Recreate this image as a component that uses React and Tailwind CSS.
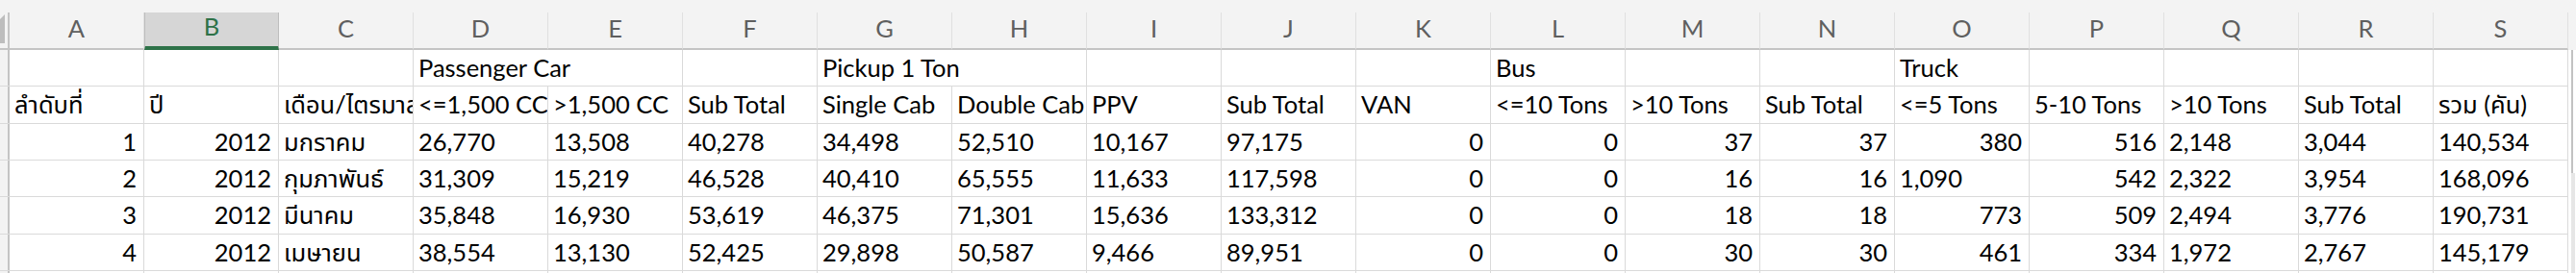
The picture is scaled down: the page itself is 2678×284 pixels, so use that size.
import React from 'react'

const LETTERS = 'ABCDEFGHIJKLMNOPQRS'.split('')

// [text, align, overflow]
const L = (t, o) => [t, 'l', o]
const R = (t) => [t, 'r']
const _ = null

const ROWS = [
  [_, _, _, L('Passenger Car', true), _, _, L('Pickup 1 Ton', true), _, _, _, _, L('Bus'), _, _, L('Truck'), _, _, _, _],
  [
    L('ลำดับที่'), L('ปี'), L('เดือน/ไตรมาส'), L('<=1,500 CC'), L('>1,500 CC'), L('Sub Total'),
    L('Single Cab'), L('Double Cab'), L('PPV'), L('Sub Total'), L('VAN'), L('<=10 Tons'),
    L('>10 Tons'), L('Sub Total'), L('<=5 Tons'), L('5-10 Tons'), L('>10 Tons'), L('Sub Total'), L('รวม (คัน)'),
  ],
  [
    R('1'), R('2012'), L('มกราคม'), L('26,770'), L('13,508'), L('40,278'), L('34,498'), L('52,510'),
    L('10,167'), L('97,175'), R('0'), R('0'), R('37'), R('37'), R('380'), R('516'), L('2,148'), L('3,044'), L('140,534'),
  ],
  [
    R('2'), R('2012'), L('กุมภาพันธ์'), L('31,309'), L('15,219'), L('46,528'), L('40,410'), L('65,555'),
    L('11,633'), L('117,598'), R('0'), R('0'), R('16'), R('16'), L('1,090'), R('542'), L('2,322'), L('3,954'), L('168,096'),
  ],
  [
    R('3'), R('2012'), L('มีนาคม'), L('35,848'), L('16,930'), L('53,619'), L('46,375'), L('71,301'),
    L('15,636'), L('133,312'), R('0'), R('0'), R('18'), R('18'), R('773'), R('509'), L('2,494'), L('3,776'), L('190,731'),
  ],
  [
    R('4'), R('2012'), L('เมษายน'), L('38,554'), L('13,130'), L('52,425'), L('29,898'), L('50,587'),
    L('9,466'), L('89,951'), R('0'), R('0'), R('30'), R('30'), R('461'), R('334'), L('1,972'), L('2,767'), L('145,179'),
  ],
  Array(19).fill(_),
]

function Cell({ cell }) {
  const [text, align, over] = cell || []
  return (
    <div
      className={`w-[140px] shrink-0 h-full flex items-center whitespace-nowrap border-r ${
        over ? 'overflow-visible border-r-transparent' : 'overflow-hidden border-r-[#dadada]'
      } ${align === 'r' ? 'justify-end pr-[7px]' : 'justify-start pl-[5px]'}`}
    >
      {text}
    </div>
  )
}

export default function App() {
  return (
    <div
      className="w-[2678px] h-[284px] overflow-hidden bg-white text-[25.5px] leading-none text-black"
      style={{ fontFamily: 'Lato, "Noto Sans", "Noto Sans Thai", "Tlwg Typist", sans-serif' }}
    >
      <div className="h-[13px] bg-[#f3f3f3]" />

      {/* column letters */}
      <div className="flex h-[39px] bg-[#f3f3f3]">
        <div className="w-[10px] shrink-0 border-r-2 border-b-2 border-[#c4c4c4] bg-[#f3f3f3] flex items-start pt-[2px]">
          <svg width="5" height="30" viewBox="0 0 5 30">
            <polygon points="5,0 5,30 0,30 0,5" fill="#bdbdbd" />
          </svg>
        </div>
        {LETTERS.map((l) =>
          l === 'B' ? (
            <div
              key={l}
              className="w-[140px] shrink-0 flex items-center justify-center pb-[5px] bg-[#d6d6d6] border-x border-x-[#bdbdbd] border-b-4 border-b-[#2e7248] text-[#2e7248]"
            >
              {l}
            </div>
          ) : (
            <div
              key={l}
              className="w-[140px] shrink-0 flex items-center justify-center pb-[3px] border-r border-r-[#e0e0e0] border-b-2 border-b-[#c4c4c4] text-[#5f5f5f]"
            >
              {l}
            </div>
          )
        )}
        <div className="flex-1 bg-[#f3f3f3]" />
      </div>

      <div className="flex">
        <div className="flex flex-col">
          {ROWS.map((row, i) => (
            <div key={i} className="flex h-[38.33px] border-b border-[#dadada]">
              <div className="w-[10px] shrink-0 h-full bg-[#f3f3f3] border-r-2 border-[#c4c4c4]" />
              {row.map((c, j) => (
                <Cell key={j} cell={c} />
              ))}
            </div>
          ))}
        </div>
        <div className="flex-1 flex pl-[3px]">
          <div className="w-[4px] flex flex-col">
            <div className="h-[128px] w-[2px] bg-[#c2c2c2]" />
            <div className="flex-1 bg-[#e6e6e6]" />
          </div>
        </div>
      </div>
    </div>
  )
}
